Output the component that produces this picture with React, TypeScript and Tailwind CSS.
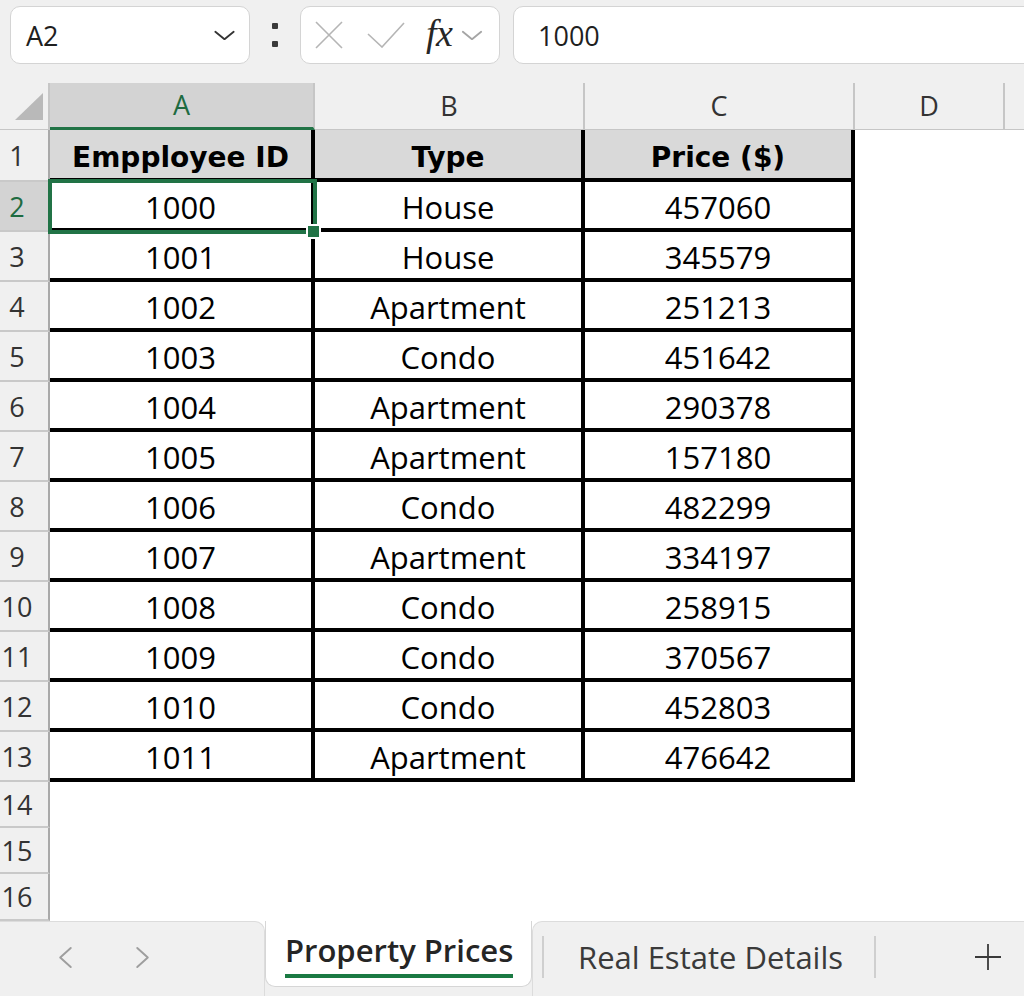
import React from "react";

const rows = [
  ["1000", "House", "457060"],
  ["1001", "House", "345579"],
  ["1002", "Apartment", "251213"],
  ["1003", "Condo", "451642"],
  ["1004", "Apartment", "290378"],
  ["1005", "Apartment", "157180"],
  ["1006", "Condo", "482299"],
  ["1007", "Apartment", "334197"],
  ["1008", "Condo", "258915"],
  ["1009", "Condo", "370567"],
  ["1010", "Condo", "452803"],
  ["1011", "Apartment", "476642"],
];

const ui = "font-['Open_Sans',sans-serif]";

const Chevron = ({ className }: { className?: string }) => (
  <svg viewBox="0 0 24 12" className={className} fill="none">
    <path d="M2 2 L12 10 L22 2" stroke="currentColor" strokeWidth="2" strokeLinecap="round" strokeLinejoin="round" />
  </svg>
);

const TopBar = () => (
  <div className={`h-[83px] bg-[#f0f0f0] flex items-start pt-[6px] overflow-hidden ${ui}`}>
    {/* name box */}
    <div className="ml-[10px] w-[240px] h-[58px] shrink-0 rounded-[10px] bg-white border border-[#d4d4d4] flex items-center justify-between pl-[15px] pr-[13px]">
      <span className="text-[27px] text-[#1f1f1f] leading-none">A2</span>
      <Chevron className="w-[23px] h-[11px] text-[#333]" />
    </div>
    <div className="ml-[22px] h-[58px] w-[6px] shrink-0 flex flex-col justify-center gap-[12px]">
      <div className="w-[6px] h-[6px] rounded-[1px] bg-[#3a3a3a]" />
      <div className="w-[6px] h-[6px] rounded-[1px] bg-[#3a3a3a]" />
    </div>
    {/* formula buttons */}
    <div className="ml-[22px] w-[200px] h-[58px] shrink-0 rounded-[10px] bg-white border border-[#d4d4d4] flex items-center pl-[14px]">
      <svg viewBox="0 0 28 28" className="w-[28px] h-[28px]" fill="none">
        <path d="M1 1 L27 27 M27 1 L1 27" stroke="#b5b5b5" strokeWidth="1.6" />
      </svg>
      <svg viewBox="0 0 38 26" className="ml-[24px] w-[38px] h-[26px]" fill="none">
        <path d="M1 12 L15 25 L37 1" stroke="#b5b5b5" strokeWidth="1.6" />
      </svg>
      <span className="ml-[21px] font-['Liberation_Serif',serif] italic text-[38px] leading-none text-[#262626] -mt-[4px] tracking-[-0.5px]">
        fx
      </span>
      <Chevron className="ml-[9px] w-[22px] h-[11px] text-[#a5a5a5]" />
    </div>
    {/* formula input */}
    <div className="ml-[13px] w-[560px] h-[58px] shrink-0 rounded-[10px] bg-white border border-[#d4d4d4] flex items-center pl-[24px]">
      <span className="text-[27px] text-[#1f1f1f] leading-none">1000</span>
    </div>
  </div>
);

const colHeads = [
  { label: "A", w: "w-[265px]", active: true },
  { label: "B", w: "w-[270px]" },
  { label: "C", w: "w-[270px]" },
  { label: "D", w: "w-[150px]" },
];

const ColumnHeader = () => (
  <div className={`flex h-[47px] bg-[#f0f0f0] ${ui}`}>
    <div className="w-[50px] shrink-0 relative border-b border-[#c6c6c6] border-r-2 border-r-[#c6c6c6]">
      <svg viewBox="0 0 28 27" className="absolute left-[15px] top-[10px] w-[28px] h-[27px]">
        <path d="M28 0 L28 27 L0 27 Z" fill="#b9b9b9" />
      </svg>
    </div>
    {colHeads.map((c) =>
      c.active ? (
        <div
          key={c.label}
          className={`${c.w} shrink-0 bg-[#d3d3d3] border-b-[3px] border-[#217346] border-r-2 border-r-[#c6c6c6] flex items-center justify-center text-[27px] text-[#1e6b41]`}
        >
          {c.label}
        </div>
      ) : (
        <div
          key={c.label}
          className={`${c.w} shrink-0 border-b border-[#c6c6c6] border-r-2 border-r-[#c6c6c6] flex items-center justify-center text-[27px] text-[#333]`}
        >
          {c.label}
        </div>
      )
    )}
    <div className="flex-1 border-b border-[#c6c6c6]" />
  </div>
);

const RowHead = ({ n, h, active }: { n: number; h: string; active?: boolean }) => (
  <div
    className={`${h} w-[50px] shrink-0 flex items-center pr-[14px] border-r-2 border-[#a9a9a9] border-b-2 border-b-[#c9c9c9] ${ui} text-[27px] leading-none ${
      active ? "bg-[#d3d3d3] text-[#1e6b41]" : "bg-[#f0f0f0] text-[#333]"
    }`}
  >
    <span className="w-full text-center">{n}</span>
  </div>
);

const Cell = ({ children, w, head }: { children: React.ReactNode; w: string; head?: boolean }) => (
  <div
    className={`${w} shrink-0 border-r-4 border-b-4 border-black flex items-center justify-center leading-none text-black ${
      head
        ? "bg-[#d9d9d9] pt-[8px] font-['DejaVu_Sans',sans-serif] font-bold text-[28px]"
        : "pt-[4px] font-['Open_Sans',sans-serif] text-[31px]"
    }`}
  >
    {children}
  </div>
);

const Sheet = () => (
  <div className="relative bg-white">
    <ColumnHeader />
    <div className="flex h-[52px]">
      <RowHead n={1} h="h-[52px]" />
      <Cell w="w-[265px]" head>Empployee ID</Cell>
      <Cell w="w-[270px]" head>Type</Cell>
      <Cell w="w-[270px]" head>Price ($)</Cell>
    </div>
    {rows.map((r, i) => (
      <div key={r[0]} className="flex h-[50px]">
        <RowHead n={i + 2} h="h-[50px]" active={i === 0} />
        <Cell w="w-[265px]">{r[0]}</Cell>
        <Cell w="w-[270px]">{r[1]}</Cell>
        <Cell w="w-[270px]">{r[2]}</Cell>
      </div>
    ))}
    <div className="flex h-[46px]">
      <RowHead n={14} h="h-[46px]" />
    </div>
    <div className="flex h-[46px]">
      <RowHead n={15} h="h-[46px]" />
    </div>
    <div className="flex h-[47px]">
      <RowHead n={16} h="h-[47px]" />
    </div>

    {/* active cell A2 */}
    <div className="absolute left-[48px] top-[96px] w-[269px] h-[55px] border-4 border-[#217346]" />
    <div className="absolute left-[306px] top-[141px] w-[15px] h-[15px] bg-[#217346] border-2 border-white" />
  </div>
);

const TabBar = () => (
  <div className={`h-[75px] flex bg-white ${ui}`}>
    <div className="w-[265px] shrink-0 bg-[#f0f0f0] rounded-tr-[10px] border-t border-r border-[#dcdcdc] flex items-start pt-[24px]">
      <svg viewBox="0 0 16 24" className="ml-[57px] w-[16px] h-[23px]" fill="none">
        <path d="M14 2 L3 12 L14 22" stroke="#9e9e9e" strokeWidth="2" strokeLinecap="round" strokeLinejoin="round" />
      </svg>
      <svg viewBox="0 0 16 24" className="ml-[62px] w-[16px] h-[23px]" fill="none">
        <path d="M2 2 L13 12 L2 22" stroke="#9e9e9e" strokeWidth="2" strokeLinecap="round" strokeLinejoin="round" />
      </svg>
    </div>
    <div className="w-[267px] shrink-0 bg-[#f0f0f0] flex flex-col">
      <div className="h-[66px] bg-white rounded-b-[10px] border-x border-b border-[#d6d6d6] pl-[19px] pt-[10px]">
        <div className="inline-flex flex-col">
          <span className="text-[31px] font-semibold text-[#252525] leading-[38px]">Property Prices</span>
          <div className="mt-[5px] h-[4px] bg-[#1a7a43]" />
        </div>
      </div>
    </div>
    <div className="flex-1 bg-[#f0f0f0] rounded-tl-[10px] border-t border-l border-[#dcdcdc] flex items-center pb-[4px]">
      <div className="ml-[9px] w-[2px] h-[42px] bg-[#cfcfcf]" />
      <span className="ml-[34px] text-[31px] text-[#3a3a3a] leading-none">Real Estate Details</span>
      <div className="ml-[31px] w-[2px] h-[42px] bg-[#cfcfcf]" />
      <svg viewBox="0 0 26 26" className="ml-[99px] w-[26px] h-[26px]" fill="none">
        <path d="M13 0 L13 26 M0 13 L26 13" stroke="#3a3a3a" strokeWidth="1.8" />
      </svg>
    </div>
  </div>
);

export default function App() {
  return (
    <div className="w-[1024px] h-[996px] overflow-hidden bg-white">
      <TopBar />
      <Sheet />
      <TabBar />
    </div>
  );
}
